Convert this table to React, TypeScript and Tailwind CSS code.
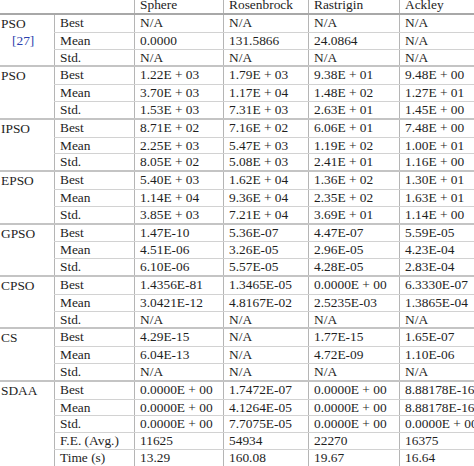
const cols = ["Sphere", "Rosenbrock", "Rastrigin", "Ackley"];

const groups = [
    {
        name: "PSO",
        ref: "[27]",
        rows: [
            ["Best", "N/A", "N/A", "N/A", "N/A"],
            ["Mean", "0.0000", "131.5866", "24.0864", "N/A"],
            ["Std.", "N/A", "N/A", "N/A", "N/A"],
        ],
    },
    {
        name: "PSO",
        rows: [
            ["Best", "1.22E + 03", "1.79E + 03", "9.38E + 01", "9.48E + 00"],
            ["Mean", "3.70E + 03", "1.17E + 04", "1.48E + 02", "1.27E + 01"],
            ["Std.", "1.53E + 03", "7.31E + 03", "2.63E + 01", "1.45E + 00"],
        ],
    },
    {
        name: "IPSO",
        rows: [
            ["Best", "8.71E + 02", "7.16E + 02", "6.06E + 01", "7.48E + 00"],
            ["Mean", "2.25E + 03", "5.47E + 03", "1.19E + 02", "1.00E + 01"],
            ["Std.", "8.05E + 02", "5.08E + 03", "2.41E + 01", "1.16E + 00"],
        ],
    },
    {
        name: "EPSO",
        rows: [
            ["Best", "5.40E + 03", "1.62E + 04", "1.36E + 02", "1.30E + 01"],
            ["Mean", "1.14E + 04", "9.36E + 04", "2.35E + 02", "1.63E + 01"],
            ["Std.", "3.85E + 03", "7.21E + 04", "3.69E + 01", "1.14E + 00"],
        ],
    },
    {
        name: "GPSO",
        rows: [
            ["Best", "1.47E-10", "5.36E-07", "4.47E-07", "5.59E-05"],
            ["Mean", "4.51E-06", "3.26E-05", "2.96E-05", "4.23E-04"],
            ["Std.", "6.10E-06", "5.57E-05", "4.28E-05", "2.83E-04"],
        ],
    },
    {
        name: "CPSO",
        rows: [
            ["Best", "1.4356E-81", "1.3465E-05", "0.0000E + 00", "6.3330E-07"],
            ["Mean", "3.0421E-12", "4.8167E-02", "2.5235E-03", "1.3865E-04"],
            ["Std.", "N/A", "N/A", "N/A", "N/A"],
        ],
    },
    {
        name: "CS",
        rows: [
            ["Best", "4.29E-15", "N/A", "1.77E-15", "1.65E-07"],
            ["Mean", "6.04E-13", "N/A", "4.72E-09", "1.10E-06"],
            ["Std.", "N/A", "N/A", "N/A", "N/A"],
        ],
    },
    {
        name: "SDAA",
        rows: [
            ["Best", "0.0000E + 00", "1.7472E-07", "0.0000E + 00", "8.88178E-16"],
            ["Mean", "0.0000E + 00", "4.1264E-05", "0.0000E + 00", "8.88178E-16"],
            ["Std.", "0.0000E + 00", "7.7075E-05", "0.0000E + 00", "0.0000E + 00"],
            ["F.E. (Avg.)", "11625", "54934", "22270", "16375"],
            ["Time (s)", "13.29", "160.08", "19.67", "16.64"],
        ],
    },
];

const rowGrid = "grid grid-cols-[80px_89px_85px_91px_1fr]";

const App = () => {
    return (
        <div
            className="w-[474px] h-[466px] overflow-hidden bg-white text-[#1e1e1e] text-[13.4px] whitespace-nowrap"
            style={{ fontFamily: '"Liberation Serif", "Times New Roman", serif' }}
        >
            {/* Header */}
            <div className="flex h-[13px] border-b-2 border-[#a8a8a8] box-content overflow-hidden">
                <div className="w-[54px]" />
                <div className={`${rowGrid} flex-1`}>
                    <div />
                    {cols.map((c) => (
                        <div key={c} className="border-l border-[#b5b5b5] pl-[5px] leading-[14px] -mt-[2px] h-[15px]">
                            {c}
                        </div>
                    ))}
                </div>
            </div>

            {/* Body */}
            {groups.map((g, gi) => (
                <div
                    key={gi}
                    className={`flex ${gi > 0 ? "border-t-2 border-[#c4c4c4]" : ""}`}
                >
                    <div className="w-[54px] shrink-0 pl-[1px] leading-[17px]">
                        <div>{g.name}</div>
                        {g.ref && <div className="ml-[11px] text-[#2b3fae]">{g.ref}</div>}
                    </div>
                    <div className="flex-1">
                        {g.rows.map((r, ri) => (
                            <div
                                key={ri}
                                className={`${rowGrid} h-[16.8px] leading-[16.5px] ${ri > 0 ? "border-t border-[#d2d2d2]" : ""}`}
                            >
                                {r.map((v, vi) => (
                                    <div key={vi} className="border-l border-[#b5b5b5] pl-[5px] overflow-hidden">
                                        {v}
                                    </div>
                                ))}
                            </div>
                        ))}
                    </div>
                </div>
            ))}
        </div>
    );
};

export default App;
